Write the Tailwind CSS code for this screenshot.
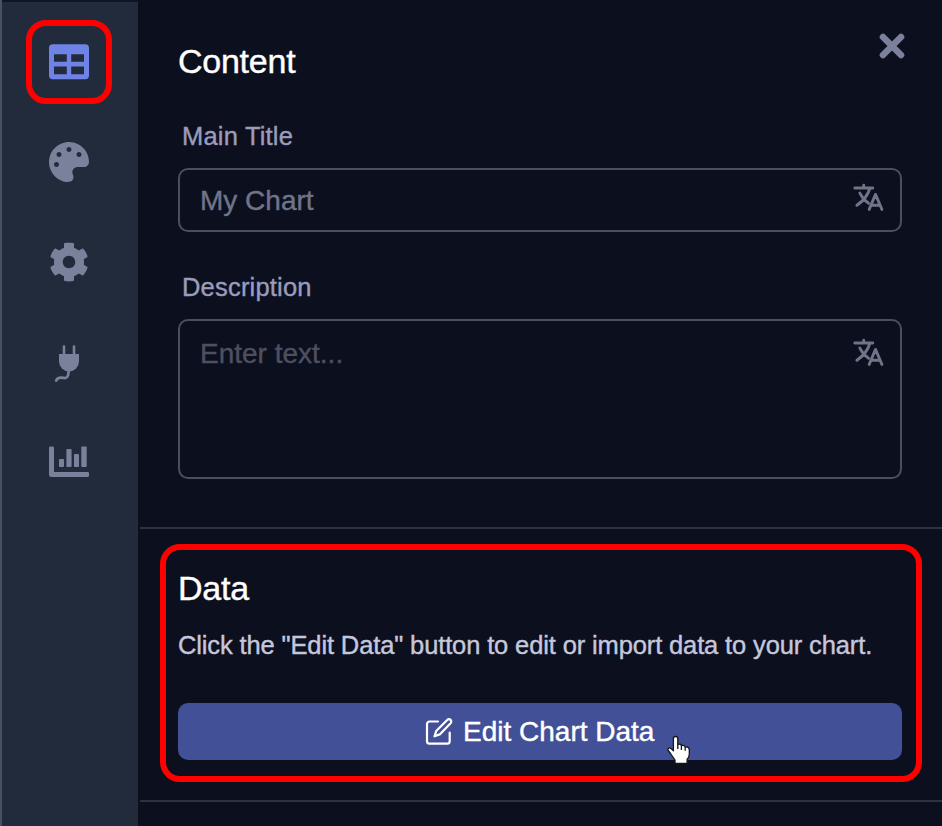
<!DOCTYPE html>
<html lang="en">
  <head>
    <meta charset="UTF-8" />
    <meta name="viewport" content="width=device-width, initial-scale=1.0" />
    <title>Chart Content</title>
    <script src="https://cdn.jsdelivr.net/npm/@tailwindcss/browser@4"></script>
  </head>
  <body class="bg-[#0c0f1e] font-['Liberation_Sans',Arial,sans-serif] [-webkit-text-stroke:0.4px] overflow-hidden">
    <div class="flex w-[942px] h-[826px]">
      <!-- Sidebar -->
      <nav class="w-[138px] shrink-0 border-l-2 border-l-[#475160] flex flex-col">
        <div class="h-0.5 shrink-0 bg-[#0f1525]"></div>
        <div class="flex-1 bg-[#222b3b] text-[#7b809b] flex flex-col items-center gap-[60px] pt-10 pr-0.5">
          <button class="relative size-10 text-[#6f82e6]">
            <svg class="size-10" viewBox="0 0 40 40" fill="currentColor" fill-rule="evenodd">
              <path d="M3.7 2.3h32.6A3.7 3.7 0 0 1 40 6v27.6a3.7 3.7 0 0 1-3.7 3.7H3.7A3.7 3.7 0 0 1 0 33.6V6a3.7 3.7 0 0 1 3.7-3.7zM5 12.2v7.6h12.8v-7.6zM22.2 12.2v7.6H35v-7.6zM5 24.6v7.6h12.8v-7.6zM22.2 24.6v7.6H35v-7.6z" />
            </svg>
            <span class="absolute -left-[23px] -top-[22px] w-[86px] h-[84px] border-6 border-[#ff0000] rounded-[20px]"></span>
          </button>
          <button class="size-10">
            <svg class="size-10" viewBox="0 0 512 512" fill="currentColor">
              <path d="M204.3 5C104.9 24.4 24.8 104.3 5.2 203.4c-37 187 131.7 326.4 258.8 306.7 41.2-6.4 61.4-54.6 42.5-91.7-23.1-45.4 9.9-98.4 60.9-98.4h79.7c35.8 0 64.8-29.6 64.9-65.3C511.5 97.1 368.1-26.9 204.3 5zM96 320c-17.7 0-32-14.3-32-32s14.3-32 32-32 32 14.3 32 32-14.3 32-32 32zm32-128c-17.7 0-32-14.3-32-32s14.3-32 32-32 32 14.3 32 32-14.3 32-32 32zm128-64c-17.7 0-32-14.3-32-32s14.3-32 32-32 32 14.3 32 32-14.3 32-32 32zm128 64c-17.7 0-32-14.3-32-32s14.3-32 32-32 32 14.3 32 32-14.3 32-32 32z" />
            </svg>
          </button>
          <button class="size-10">
            <svg class="size-10" viewBox="0 0 512 512" fill="currentColor">
              <path d="M487.4 315.7l-42.6-24.6c4.3-23.2 4.3-47 0-70.2l42.6-24.6c4.9-2.8 7.1-8.6 5.5-14-11.1-35.6-30-67.8-54.7-94.6-3.8-4.1-10-5.1-14.8-2.3L380.8 110c-17.9-15.4-38.5-27.3-60.8-35.1V25.8c0-5.6-3.9-10.5-9.4-11.7-36.7-8.2-74.3-7.8-109.2 0-5.5 1.2-9.4 6.1-9.4 11.7V75c-22.2 7.9-42.8 19.8-60.8 35.1L88.7 85.5c-4.9-2.8-11-1.9-14.8 2.3-24.7 26.7-43.6 58.9-54.7 94.6-1.7 5.4.6 11.2 5.5 14L67.3 221c-4.3 23.2-4.3 47 0 70.2l-42.6 24.6c-4.9 2.8-7.1 8.6-5.5 14 11.1 35.6 30 67.8 54.7 94.6 3.8 4.1 10 5.1 14.8 2.3l42.6-24.6c17.9 15.4 38.5 27.3 60.8 35.1v49.2c0 5.6 3.9 10.5 9.4 11.7 36.7 8.2 74.3 7.8 109.2 0 5.5-1.2 9.4-6.1 9.4-11.7v-49.2c22.2-7.9 42.8-19.8 60.8-35.1l42.6 24.6c4.9 2.8 11 1.9 14.8-2.3 24.7-26.7 43.6-58.9 54.7-94.6 1.5-5.5-.7-11.3-5.6-14.1zM256 336c-44.1 0-80-35.9-80-80s35.9-80 80-80 80 35.9 80 80-35.9 80-80 80z" />
            </svg>
          </button>
          <button class="size-10">
            <svg class="size-10" viewBox="0 0 40 40" fill="currentColor">
              <rect x="13.7" y="3.3" width="2.6" height="10" rx="1.3" />
              <rect x="23.7" y="3.3" width="2.6" height="10" rx="1.3" />
              <path d="M10 12h20v7.5a10 10 0 0 1-20 0z" />
              <path d="M19.600 29c0 5.500-1.800 7.600-4.800 6.900-3.800-.8-6.500-.6-7.600 2.600" fill="none" stroke="currentColor" stroke-width="2.700" stroke-linecap="round" />
            </svg>
          </button>
          <button class="size-10">
            <svg class="size-10" viewBox="0 0 40 40" fill="currentColor">
              <path d="M1.200 4.500h2.600A1.200 1.200 0 0 1 5 5.700V30h33.800a1.200 1.200 0 0 1 1.200 1.200v2.600a1.200 1.200 0 0 1-1.200 1.200H2.500A2.500 2.500 0 0 1 0 32.500V5.700a1.200 1.200 0 0 1 1.200-1.200z" />
              <rect x="10" y="17" width="5" height="8" rx=".8" />
              <rect x="17.400" y="7" width="5.200" height="18" rx=".8" />
              <rect x="25" y="12" width="5" height="13" rx=".8" />
              <rect x="32.300" y="4.500" width="5.400" height="20.500" rx=".8" />
            </svg>
          </button>
        </div>
      </nav>

      <main class="flex-1 pl-0.5 flex flex-col">
        <section class="h-[529px] shrink-0 border-b-2 border-[#2e313e] pl-[38px] pr-10">
          <div class="flex justify-between h-[119px]">
            <h1 class="mt-[41px] text-[34px] leading-10 text-white tracking-[-0.25px]">Content</h1>
            <svg class="mt-[33px] -mr-[3px] size-[26px]" viewBox="0 0 26 26" fill="none" stroke="#7b809b" stroke-width="6.600" stroke-linecap="round">
              <path d="M4 4l18 18M22 4L4 22" />
            </svg>
          </div>
          <label class="block ml-1 h-[49px] text-[25.5px] leading-[34px] tracking-[0.2px] text-[#9a9cbc]">Main Title</label>
          <div class="h-16 border-2 border-[#4b4e5e] rounded-[10px] flex justify-between pl-5 pr-4">
            <span class="text-[28px] leading-[62px] text-[#717489]">My Chart</span>
            <svg class="mt-3 size-8" viewBox="0 0 32 32" fill="none" stroke="#717489" stroke-width="2.900" stroke-linecap="round" stroke-linejoin="round">
              <path d="M2.800 6h18M11.700 3.300v2.700M17.800 6.500C16 13 11 19 4.900 23.300M7.800 11c2 4.200 5 7.600 8.700 10.200M17.200 27.400l6.300-15 6.400 15M19.300 23.200h8.600" />
            </svg>
          </div>
          <label class="block ml-1 mt-[38px] h-[49px] text-[25.5px] leading-[34px] tracking-[0.2px] text-[#9a9cbc]">Description</label>
          <div class="h-40 border-2 border-[#4b4e5e] rounded-[10px] flex justify-between pl-5 pr-4">
            <span class="mt-[13px] text-[28px] leading-10 text-[#4d5061]">Enter text...</span>
            <svg class="mt-4 size-8" viewBox="0 0 32 32" fill="none" stroke="#717489" stroke-width="2.900" stroke-linecap="round" stroke-linejoin="round">
              <path d="M2.800 6h18M11.700 3.300v2.700M17.800 6.500C16 13 11 19 4.900 23.300M7.800 11c2 4.200 5 7.600 8.700 10.200M17.200 27.400l6.300-15 6.400 15M19.300 23.200h8.600" />
            </svg>
          </div>
        </section>

        <section class="relative h-[273px] shrink-0 border-b-2 border-[#2e313e] pl-[38px] pr-10">
          <h2 class="mt-[39px] text-[34px] leading-10 text-white tracking-[-0.2px]">Data</h2>
          <p class="mt-5 text-[25.5px] leading-[34px] tracking-[-0.13px] text-[#c5c7dc] whitespace-nowrap">Click the "Edit Data" button to edit or import data to your chart.</p>
          <button class="relative mt-[41px] w-full h-[57px] rounded-[10px] bg-[#425097] text-white flex items-center pl-[247px]">
            <svg class="size-[28px] shrink-0 -mt-0.5" viewBox="0 0 28 28" fill="none" stroke="currentColor" stroke-width="2.200" stroke-linecap="round" stroke-linejoin="round">
              <path d="M13 4.500H4.500a2.500 2.500 0 0 0-2.500 2.500v17.200a2.500 2.500 0 0 0 2.500 2.500h17.700a2.500 2.500 0 0 0 2.500-2.500V15.500" />
              <path d="M22.200 2.900a2.350 2.350 0 0 1 3.400 3.300L14.700 17.400l-5.200 1.900 1.700-5.200z" />
            </svg>
            <span class="ml-2.5 text-[28px] leading-10 whitespace-nowrap">Edit Chart Data</span>
            <svg class="absolute left-[489px] top-8 w-6 h-[30px]" viewBox="0 0 24 30" fill="#fff" stroke="#161616" stroke-width="1.300" stroke-linejoin="round">
              <path d="M8.500 1.500q2.300 0 2.300 2v6q3-1 3.600 1 3-.8 3.800 1.400 3.800-.3 4.100 2.600v5q-.3 3-2.200 5v4H8v-3.500L3.500 18.500.8 14.800q.8-2.600 3-1.500l2.600 2.400V3.500q0-2 2.100-2z" />
              <path d="M10.800 9.500v4.500M14.400 10.500V15M18.200 12v3.800" fill="none" />
            </svg>
          </button>
          <!-- Highlight around the data block -->
          <div class="absolute left-5 top-[15px] w-[762px] h-[238px] border-6 border-[#ff0000] rounded-[20px]"></div>
        </section>
      </main>
    </div>
  </body>
</html>
